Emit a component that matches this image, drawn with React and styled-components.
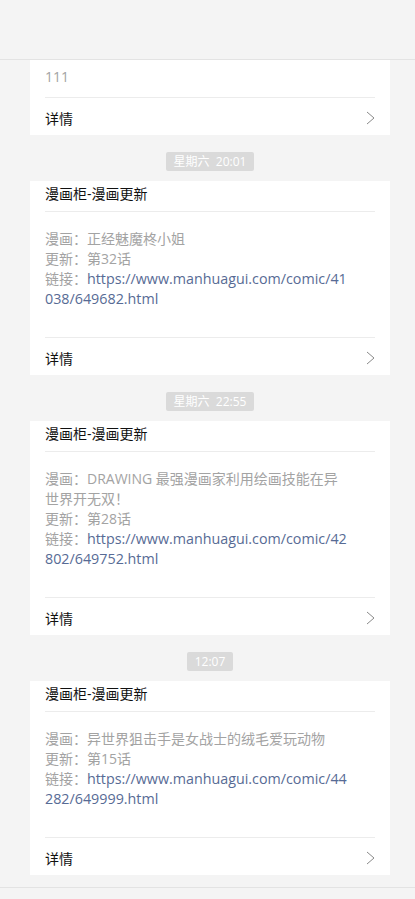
import React from 'react'
import styled, { createGlobalStyle } from 'styled-components'

const GlobalStyle = createGlobalStyle`
  html, body {
    margin: 0;
    padding: 0;
    background: #f4f4f4;
    font-family: "Open Sans", "Noto Sans CJK SC", sans-serif;
  }
`

const Page = styled.div`
  height: 899px;
  overflow: hidden;
  background: #f4f4f4;
`

const Header = styled.div`
  height: 59px;
  border-bottom: 1px solid #e3e3e3;
  background: #f4f4f4;
`

const List = styled.div`
  display: flex;
  flex-direction: column;
  padding: 0 25px 12px 30px;
`

const Card = styled.div`
  background: #fff;
  padding: 0 15px;
  width: 330px;
`

const Title = styled.div`
  font-size: 14px;
  line-height: 26px;
  padding-bottom: 4px;
  color: #111;
  border-bottom: 1px solid #ececec;
`

const Body = styled.div`
  padding: ${p => (p.$short ? '7px 0 10px' : '17px 26px 28px 0')};
  font-size: 14px;
  line-height: 20px;
  color: #a3a3a3;
`

const Line = styled.div`
  word-break: break-all;
`

const Link = styled.span`
  color: #576b95;
  font-size: 14.3px;
`

const Footer = styled.div`
  display: flex;
  align-items: center;
  justify-content: space-between;
  height: 38px;
  padding-top: 3px;
  box-sizing: border-box;
  border-top: 1px solid #ececec;
  font-size: 14px;
  color: #111;
`

const Stamp = styled.div`
  align-self: center;
  margin: 17px 0 10px;
  padding: 0 8px;
  height: 19px;
  line-height: 19px;
  background: #dadada;
  color: #fff;
  font-size: 12px;
  border-radius: 2px;
  white-space: pre;
`

const InputBar = styled.div`
  height: 60px;
  border-top: 1px solid #e3e3e3;
  background: #f4f4f4;
`

const Chevron = () => (
  <svg width="9" height="14" viewBox="0 0 9 14">
    <polyline points="1,1 8,7 1,13" fill="none" stroke="#8a8a8a" strokeWidth="1" />
  </svg>
)

const updates = [
  {
    time: '星期六  20:01',
    name: '正经魅魔柊小姐',
    chapter: '第32话',
    url: 'https://www.manhuagui.com/comic/41038/649682.html',
  },
  {
    time: '星期六  22:55',
    name: 'DRAWING 最强漫画家利用绘画技能在异世界开无双！',
    chapter: '第28话',
    url: 'https://www.manhuagui.com/comic/42802/649752.html',
  },
  {
    time: '12:07',
    name: '异世界狙击手是女战士的绒毛爱玩动物',
    chapter: '第15话',
    url: 'https://www.manhuagui.com/comic/44282/649999.html',
  },
]

const DetailRow = () => (
  <Footer>
    <span>详情</span>
    <Chevron />
  </Footer>
)

export default function App() {
  return (
    <Page>
      <GlobalStyle />
      <Header />
      <List>
        <Card>
          <Body $short>
            <Line>111</Line>
          </Body>
          <DetailRow />
        </Card>
        {updates.map(u => (
          <React.Fragment key={u.url}>
            <Stamp>{u.time}</Stamp>
            <Card>
              <Title>漫画柜-漫画更新</Title>
              <Body>
                <Line>漫画：{u.name}</Line>
                <Line>更新：{u.chapter}</Line>
                <Line>
                  链接：<Link>{u.url}</Link>
                </Line>
              </Body>
              <DetailRow />
            </Card>
          </React.Fragment>
        ))}
      </List>
      <InputBar />
    </Page>
  )
}
